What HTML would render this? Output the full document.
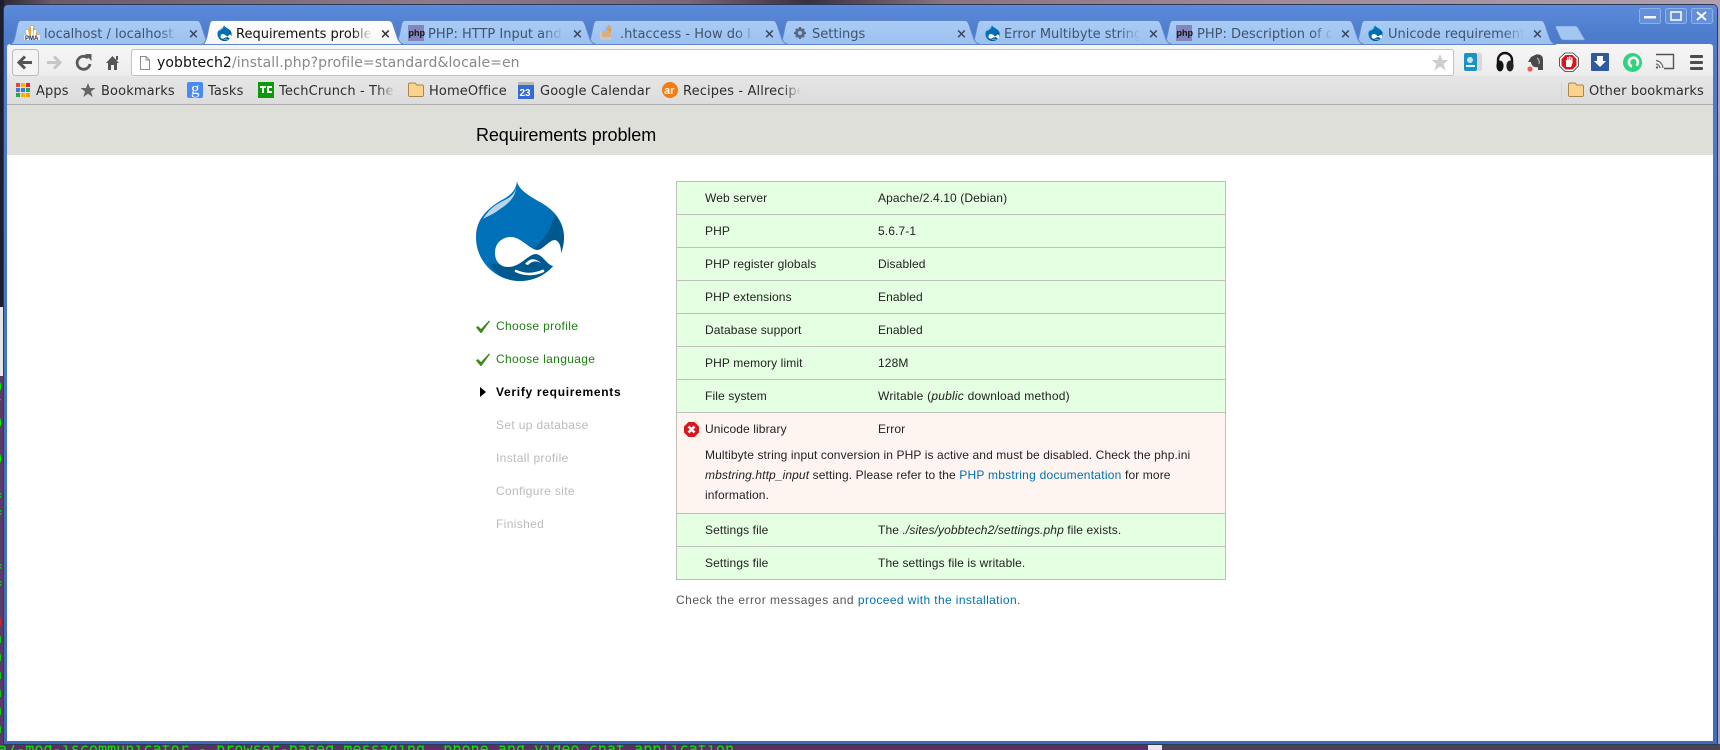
<!DOCTYPE html>
<html><head><meta charset="utf-8"><title>Requirements problem</title>
<style>
html,body{margin:0;padding:0;width:1720px;height:750px;overflow:hidden;background:#4a3f4d}
*{box-sizing:border-box}
.a{position:absolute;white-space:nowrap}
#desk{position:absolute;left:0;top:0;width:1720px;height:750px;background:linear-gradient(90deg,#2a2530 0,#6a5a6a 3%,#8f7a8c 25%,#7a6578 40%,#3a3040 47%,#8a7484 55%,#a08a9c 75%,#b0a0b0 100%)}
#termb{position:absolute;left:0;top:744px;width:1148px;height:6px;background:#5c2f62;overflow:hidden}
#termb span{position:absolute;left:-2px;top:-3px;font:15.1px "DejaVu Sans Mono","Liberation Mono",monospace;color:#0e0;white-space:nowrap;line-height:16px}
#lcol{position:absolute;left:0;top:376px;width:4px;height:374px;background:#5c3a68;overflow:hidden}
#lcol span{position:absolute;left:-7px;font:15px/16px "DejaVu Sans Mono","Liberation Mono",monospace;color:#0e0}
#win{position:absolute;left:4px;top:5px;width:1713px;height:739px;background:linear-gradient(180deg,#5d8bdb 0,#4d7ccd 30px,#3e6cbb 100%);border-radius:4px 4px 0 0;box-shadow:0 0 0 1px #2c3a55}
#tb{position:absolute;left:7px;top:44px;width:1706px;height:61px;background:linear-gradient(180deg,#f6f6f6 0,#ededed 31px,#e6e6e6 32px,#dcdcdc 60px);border-bottom:1px solid #aeaeae;border-radius:3px 3px 0 0}
#page{position:absolute;left:7px;top:105px;width:1706px;height:636px;background:#fff}
#hd{position:absolute;left:7px;top:105px;width:1706px;height:50px;background:#dfdfd9}
.ui{font:13px "DejaVu Sans",sans-serif;color:#333;line-height:16px;letter-spacing:.13px}
.tab{font:13px "DejaVu Sans",sans-serif;color:#40536e;line-height:16px;top:27px;-webkit-mask-image:linear-gradient(90deg,#000 85%,transparent 100%);mask-image:linear-gradient(90deg,#000 85%,transparent 100%);overflow:hidden}
.x{font:bold 13px "DejaVu Sans",sans-serif;color:#3c4a60;top:27px;line-height:16px}
.bm{top:84px;color:#2d2d2d}
.s{font:12px/16px "Liberation Sans",sans-serif;letter-spacing:.35px;color:#8e8e8e}
.st{left:496px;color:#bbb}
.g{color:#1e7f12}
#tbl{position:absolute;left:676px;top:181px;width:550px;height:399px;background:#e4ffe1;border:1px solid #bebfb9}
.l{position:absolute;left:677px;width:548px;height:1px;background:#bebfb9}
.t{font:12px/16px "Liberation Sans",sans-serif;color:#222;letter-spacing:.11px}
a{color:#0071b3;text-decoration:none;letter-spacing:.25px}
</style></head><body>
<div id="desk"></div>
<div class="a" style="left:0;top:0;width:4px;height:307px;background:#1d1d30"></div>
<div class="a" style="left:0;top:307px;width:4px;height:69px;background:#e6e6e6"></div>
<div id="lcol">
<span style="top:3px">O</span><span style="top:21px">/</span><span style="top:39px">O</span><span style="top:75px">O</span><span style="top:111px">=</span><span style="top:128px">=</span><span style="top:182px">=</span><span style="top:199px">=</span><span style="top:216px">-</span><span style="top:236px;color:#e22">a</span><span style="top:254px">a</span><span style="top:272px">a</span><span style="top:290px">a</span><span style="top:308px">a</span><span style="top:326px">a</span><span style="top:344px">a</span>
</div>
<div class="a" style="left:1148px;top:744px;width:14px;height:6px;background:#e8e8e8"></div>
<div class="a" style="left:1162px;top:744px;width:558px;height:6px;background:#4a4350"></div>
<div id="termb"><span>a7-mod-iscommunicator - browser-based messaging, phone and video chat application</span></div>
<div id="win"></div>
<div id="tb"></div>
<div id="page"></div>
<div id="hd"></div>

<svg class="a" style="left:0;top:0" width="1720" height="110" viewBox="0 0 1720 110">
<defs>
<linearGradient id="ti" x1="0" y1="0" x2="0" y2="1"><stop offset="0" stop-color="#a9cbf6"/><stop offset="1" stop-color="#9cc1ef"/></linearGradient>
<linearGradient id="ta" x1="0" y1="0" x2="0" y2="1"><stop offset="0" stop-color="#fff"/><stop offset="1" stop-color="#f6f6f6"/></linearGradient>
<path id="tp" d="M-6 24C-3 23 -2 20 -1 16L1.5 4C2 1 3 0 6 0H180C183 0 184 1 185 4L189 16C190 20 192 23 196 24Z"/>
<symbol id="drop" viewBox="0 0 88 100">
<path d="M41 0C42 8 52 14 62 20C76 27 88 39 88 56C88 81 68 100 44 100C20 100 0 81 0 56C0 37 13 27 24 20C32 16 40 11 41 0Z" fill="#0071b8"/>
<path d="M78 33C84 40 88 47 88 56C88 81 68 100 44 100C31 100 20 94 13 82C26 85 40 82 52 72C65 62 76 50 78 33Z" fill="#00598e"/>
<path d="M40 6C39 14 33 17 25 21C17 25 11 31 7 38C12 35 18 33 24 28C32 23 40 16 40 6Z" fill="#b9d6ec"/>
<path d="M19 72C19 62 26 56 35 56C45 56 53 68 61 69C67 69 73 59 79 59C83 60 85 65 85 71C85 79 82 86 77 85C71 84 67 74 60 73C52 73 45 86 32 86C24 86 19 80 19 72Z" fill="#fff"/>
<path d="M40 90Q53 96 67 90" fill="none" stroke="#fff" stroke-width="2.6" stroke-linecap="round"/>
<path d="M49 83Q56 74 65 82Q58 78 52 84Z" fill="#fff"/>
</symbol>
</defs>
<g fill="url(#ti)" stroke="#5f86c6" stroke-width="1">
<use href="#tp" x="1360" y="20.5"/>
<use href="#tp" x="1168" y="20.5"/>
<use href="#tp" x="976" y="20.5"/>
<use href="#tp" x="784" y="20.5"/>
<use href="#tp" x="592" y="20.5"/>
<use href="#tp" x="400" y="20.5"/>
<use href="#tp" x="16" y="20.5"/>
</g>
<use href="#tp" x="208" y="20.5" fill="url(#ta)" stroke="#5f86c6"/>
<path d="M1557 26H1575Q1577 26 1578 28L1585 40H1564Q1561 40 1560 37L1556 28Q1555 26 1557 26Z" fill="#a3c6f3" stroke="#6b90cc" stroke-width=".6"/>
<!-- window buttons -->
<g fill="#6490da" stroke="#8fb0e6" stroke-width="1">
<rect x="1639.5" y="8.5" width="21" height="15" rx="2"/><rect x="1665.5" y="8.5" width="21" height="15" rx="2"/><rect x="1691.5" y="8.5" width="21" height="15" rx="2"/>
</g>
<rect x="1644" y="16" width="12" height="2.5" fill="#fff" opacity=".9"/>
<rect x="1671" y="12" width="10" height="8" fill="none" stroke="#fff" stroke-width="1.7" opacity=".9"/>
<path d="M1697 12L1706 20M1706 12L1697 20" stroke="#fff" stroke-width="2" opacity=".95"/>
<!-- favicons -->
<g>
<path d="M24 40L31 25L33 25L40 40Z" fill="#f4a423"/><path d="M26 30h2l2 8h-3zM31 26h2v12h-2zM36 30h-2l-1 8h3z" fill="#fff"/><rect x="24" y="35" width="16" height="5" fill="#eee"/>
<text x="25" y="40" font-family="Liberation Sans" font-size="6" font-weight="bold" fill="#235">PMA</text>
<use href="#drop" x="217" y="25" width="15" height="16"/>
<rect x="408" y="25" width="16" height="16" fill="#8385bd"/><text x="408.5" y="36" font-family="Liberation Sans" font-size="9" font-weight="bold" fill="#111">php</text>
<rect x="600" y="31" width="11" height="9" fill="#c7c7c7"/><path d="M602 32h9M602 34h9M602 36h9M605 29l6 2M606 27l5 3M608 25l3 4" stroke="#e8973a" stroke-width="1.1"/>
<circle cx="800" cy="33" r="5" fill="#59697f"/><path d="M800 27v12M794 33h12M796 29l8 8M804 29l-8 8" stroke="#59697f" stroke-width="2"/><circle cx="800" cy="33" r="2" fill="#9fc3f0"/>
<use href="#drop" x="985" y="25" width="15" height="16"/>
<rect x="1176" y="25" width="16" height="16" fill="#8385bd"/><text x="1176.5" y="36" font-family="Liberation Sans" font-size="9" font-weight="bold" fill="#111">php</text>
<use href="#drop" x="1368" y="25" width="15" height="16"/>
</g>
<!-- back button -->
<rect x="12.5" y="49.5" width="26" height="26" rx="3" fill="#f4f4f4" stroke="#bbb"/>
<path d="M19 62.5H32M25 56.5L19 62.5L25 68.5" fill="none" stroke="#555" stroke-width="3"/>
<path d="M47 62.5H60M54 56.5L60 62.5L54 68.5" fill="none" stroke="#c6c6c6" stroke-width="3"/>
<path d="M88 58A6.5 6.5 0 1 0 90 64" fill="none" stroke="#5a5a5a" stroke-width="2.8"/><path d="M85 54L91.5 54L91.5 61Z" fill="#5a5a5a"/>
<path d="M106 63L112.5 56L119 63H117V70H114V65H111V70H108V63Z" fill="#555"/><rect x="116" y="56" width="2" height="4" fill="#555"/>
<!-- address -->
<rect x="131.5" y="49.5" width="1322" height="26" rx="2" fill="#fff" stroke="#c4c4c4"/>
<path d="M140.5 56.5H146L149.5 60V69.5H140.5Z" fill="#fff" stroke="#8d8d8d"/><path d="M146 56.5V60H149.5" fill="none" stroke="#8d8d8d"/>
<path d="M1440 54L1442.5 60H1448.5L1443.6 64L1445.5 70.5L1440 66.5L1434.5 70.5L1436.4 64L1431.5 60H1437.5Z" fill="#cfcfcf"/>
<!-- ext icons -->
<rect x="1464" y="53" width="18" height="18" rx="2" fill="#d8d8d8"/><rect x="1464" y="53" width="13" height="18" rx="2" fill="#1b93bf"/><circle cx="1470" cy="60" r="3" fill="#c8e6f0"/><rect x="1466" y="65" width="9" height="2" fill="#e6f3f8"/>
<path d="M1498 65V60A7 7 0 0 1 1512 60V65" fill="none" stroke="#111" stroke-width="2.4"/><ellipse cx="1500" cy="66" rx="3.6" ry="5.5" fill="#111"/><ellipse cx="1510" cy="66" rx="3.6" ry="5.5" fill="#222"/>
<path d="M1531 57L1536 54.500C1541 54 1543 56 1543 60V70H1538V67C1535 68 1531 66 1531 62H1528Z" fill="#4a4a4a"/><path d="M1537 58Q1540 60 1539 64" fill="none" stroke="#ccc" stroke-width="1"/><circle cx="1530" cy="69" r="2.6" fill="#e8604c"/>
<path d="M1565 53H1573L1578.500 58V66L1573 71.500H1565L1559.500 66V58Z" fill="#fff" stroke="#333" stroke-width=".8"/><path d="M1565.500 55H1572.500L1576.500 59V65.500L1572.500 69.500H1565.500L1561.500 65.500V59Z" fill="#d8161b"/><path d="M1566 67V60H1567V57H1568.500V60H1569V56.500H1570.500V60H1571V57.500H1572.500V63L1571 67Z" fill="#fff"/>
<rect x="1591" y="53" width="18" height="18" rx="1" fill="#2f5a9e"/><path d="M1597 56H1603V61H1606L1600 67L1594 61H1597Z" fill="#fff"/>
<circle cx="1632.500" cy="62.500" r="9.500" fill="#2fd27e"/><path d="M1636.500 65.500A4.500 4.500 0 1 0 1632 66.500" fill="none" stroke="#fff" stroke-width="2.6"/>
<path d="M1656 54.500H1673.500V68.500H1664" fill="none" stroke="#555" stroke-width="1.4"/><path d="M1656 60.500A8 8 0 0 1 1663 68M1656 64A4.500 4.500 0 0 1 1660 68" fill="none" stroke="#666" stroke-width="1.2"/><circle cx="1657" cy="67.500" r="1.200" fill="#666"/>
<rect x="1690" y="55" width="13" height="3" rx="1" fill="#4d4d4d"/><rect x="1690" y="61" width="13" height="3" rx="1" fill="#4d4d4d"/><rect x="1690" y="67" width="13" height="3" rx="1" fill="#4d4d4d"/>
<!-- bookmark icons -->
<g><rect x="16" y="83" width="4" height="4" fill="#e24a3b"/><rect x="21" y="83" width="4" height="4" fill="#f4b400"/><rect x="26" y="83" width="4" height="4" fill="#d24"/><rect x="16" y="88" width="4" height="4" fill="#3a7be0"/><rect x="21" y="88" width="4" height="4" fill="#3a7be0"/><rect x="26" y="88" width="4" height="4" fill="#2da44e"/><rect x="16" y="93" width="4" height="4" fill="#2da44e"/><rect x="21" y="93" width="4" height="4" fill="#f4b400"/><rect x="26" y="93" width="4" height="4" fill="#f4a000"/></g>
<path d="M88 83L90 88H95.500L91 91.500L92.700 97L88 93.700L83.300 97L85 91.500L80.500 88H86Z" fill="#666"/>
<rect x="187" y="82" width="16" height="16" rx="2" fill="#4a8af4"/><text x="191" y="94" font-family="Liberation Serif" font-size="17" fill="#fff">g</text>
<rect x="258" y="82" width="16" height="16" fill="#0a9a0a"/><path d="M260 86H266V88H264V93H262V88H260ZM272 86H267V93H272V91H269V88H272Z" fill="#fff"/>
<path d="M408.500 84.500Q408.500 83 410 83H415L417 85H422Q423.500 85 423.500 86.500V95Q423.500 96.500 422 96.500H410Q408.500 96.500 408.500 95Z" fill="#fbd38c" stroke="#a8864c"/>
<rect x="518" y="83" width="16" height="16" fill="#3569d8"/><rect x="518" y="82" width="16" height="3" fill="#b7b7b7"/><text x="519.500" y="96" font-family="Liberation Sans" font-size="10" font-weight="bold" fill="#fff">23</text>
<circle cx="670" cy="90" r="8" fill="#f47c11"/><text x="664" y="94" font-family="Liberation Sans" font-size="11" font-weight="bold" fill="#fff">ar</text>
<path d="M1561.500 82V102" stroke="#cfd6de"/>
<path d="M1568.500 84.500Q1568.500 83 1570 83H1575L1577 85H1582Q1583.500 85 1583.500 86.500V95Q1583.500 96.500 1582 96.500H1570Q1568.500 96.500 1568.500 95Z" fill="#fbd38c" stroke="#a8864c"/>
</svg>

<span class="a tab" style="left:44px;width:135px">localhost / localhost</span><span class="a x" style="left:188px">×</span>
<span class="a tab" style="left:236px;width:136px;color:#111">Requirements problem</span><span class="a x" style="left:380px;color:#333">×</span>
<span class="a tab" style="left:428px;width:135px">PHP: HTTP Input and Output</span><span class="a x" style="left:572px">×</span>
<span class="a tab" style="left:620px;width:136px">.htaccess - How do I disable</span><span class="a x" style="left:764px">×</span>
<span class="a tab" style="left:812px;width:136px">Settings</span><span class="a x" style="left:956px">×</span>
<span class="a tab" style="left:1004px;width:136px">Error Multibyte string input</span><span class="a x" style="left:1148px">×</span>
<span class="a tab" style="left:1197px;width:136px">PHP: Description of core</span><span class="a x" style="left:1340px">×</span>
<span class="a tab" style="left:1388px;width:136px">Unicode requirements</span><span class="a x" style="left:1532px">×</span>

<span class="a" style="left:157px;top:55px;font:14px/17px 'DejaVu Sans',sans-serif;letter-spacing:.08px;color:#888"><span style="color:#111">yobbtech2</span>/install.php?profile=standard&amp;locale=en</span>

<span class="a ui bm" style="left:36px">Apps</span>
<span class="a ui bm" style="left:101px">Bookmarks</span>
<span class="a ui bm" style="left:208px">Tasks</span>
<span class="a ui bm" style="left:279px;width:116px;overflow:hidden;-webkit-mask-image:linear-gradient(90deg,#000 85%,transparent)">TechCrunch - The Latest</span>
<span class="a ui bm" style="left:429px">HomeOffice</span>
<span class="a ui bm" style="left:540px">Google Calendar</span>
<span class="a ui bm" style="left:683px;width:118px;overflow:hidden;-webkit-mask-image:linear-gradient(90deg,#000 85%,transparent)">Recipes - Allrecipes.com</span>
<span class="a ui bm" style="left:1589px">Other bookmarks</span>

<span class="a" style="left:476px;top:124px;font:18px/22px 'Liberation Sans',sans-serif;letter-spacing:-.1px;color:#000">Requirements problem</span>

<svg class="a" style="left:476px;top:181px" width="88" height="100"><use href="#drop" width="88" height="100"/></svg>

<svg class="a" style="left:476px;top:320px" width="15" height="13" viewBox="0 0 15 13"><path d="M0 7.500L2 6L5 9L13 .5L14 1.200L5.500 13H4.500Z" fill="#3b8a1c"/></svg>
<svg class="a" style="left:476px;top:353px" width="15" height="13" viewBox="0 0 15 13"><path d="M0 7.500L2 6L5 9L13 .5L14 1.200L5.500 13H4.500Z" fill="#3b8a1c"/></svg>
<svg class="a" style="left:480px;top:387px" width="7" height="10"><path d="M0 0L6 5L0 10Z" fill="#000"/></svg>
<span class="a s st g" style="top:318px">Choose profile</span>
<span class="a s st g" style="top:351px">Choose language</span>
<span class="a s" style="left:496px;top:384px;color:#000;font-weight:bold;letter-spacing:.7px">Verify requirements</span>
<span class="a s st" style="top:417px">Set up database</span>
<span class="a s st" style="top:450px">Install profile</span>
<span class="a s st" style="top:483px">Configure site</span>
<span class="a s st" style="top:516px">Finished</span>

<div id="tbl"></div>
<div class="a" style="left:677px;top:413px;width:548px;height:100px;background:#fef5f1"></div>
<div class="l" style="top:214px"></div><div class="l" style="top:247px"></div><div class="l" style="top:280px"></div><div class="l" style="top:313px"></div><div class="l" style="top:346px"></div><div class="l" style="top:379px"></div><div class="l" style="top:412px"></div><div class="l" style="top:513px"></div><div class="l" style="top:546px"></div>

<span class="a t" style="left:705px;top:190px">Web server</span><span class="a t" style="left:878px;top:190px">Apache/2.4.10 (Debian)</span>
<span class="a t" style="left:705px;top:223px">PHP</span><span class="a t" style="left:878px;top:223px">5.6.7-1</span>
<span class="a t" style="left:705px;top:256px">PHP register globals</span><span class="a t" style="left:878px;top:256px">Disabled</span>
<span class="a t" style="left:705px;top:289px">PHP extensions</span><span class="a t" style="left:878px;top:289px">Enabled</span>
<span class="a t" style="left:705px;top:322px">Database support</span><span class="a t" style="left:878px;top:322px">Enabled</span>
<span class="a t" style="left:705px;top:355px">PHP memory limit</span><span class="a t" style="left:878px;top:355px">128M</span>
<span class="a t" style="left:705px;top:388px">File system</span><span class="a t" style="left:878px;top:388px;letter-spacing:.22px">Writable (<i>public</i> download method)</span>
<span class="a t" style="left:705px;top:421px">Unicode library</span><span class="a t" style="left:878px;top:421px">Error</span>
<svg class="a" style="left:684px;top:422px" width="15" height="15" viewBox="0 0 15 15"><path d="M4.500 0H10.500L15 4.500V10.500L10.500 15H4.500L0 10.500V4.500Z" fill="#d9161d"/><path d="M4.500 4.500L10.500 10.500M10.500 4.500L4.500 10.500" stroke="#fff" stroke-width="2.600"/></svg>
<span class="a t" style="left:705px;top:447px">Multibyte string input conversion in PHP is active and must be disabled. Check the php.ini</span>
<span class="a t" style="left:705px;top:467px"><i>mbstring.http_input</i> setting. Please refer to the <a>PHP mbstring documentation</a> for more</span>
<span class="a t" style="left:705px;top:487px">information.</span>
<span class="a t" style="left:705px;top:522px">Settings file</span><span class="a t" style="left:878px;top:522px">The <i>./sites/yobbtech2/settings.php</i> file exists.</span>
<span class="a t" style="left:705px;top:555px">Settings file</span><span class="a t" style="left:878px;top:555px">The settings file is writable.</span>
<span class="a t" style="left:676px;top:592px;color:#555;letter-spacing:.5px">Check the error messages and <a style="letter-spacing:.38px">proceed with the installation</a>.</span>
</body></html>
